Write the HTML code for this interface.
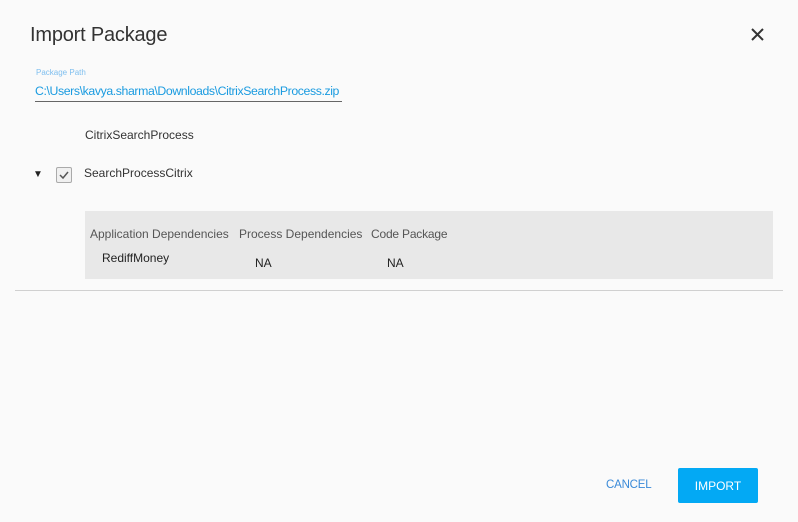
<!DOCTYPE html>
<html><head><style>
body{margin:0;width:798px;height:522px;background:#fafafa;font-family:"Liberation Sans",sans-serif;position:relative;overflow:hidden}
.a{position:absolute;white-space:nowrap}
</style></head><body>
<div class="a" style="left:30px;top:24px;font-size:20px;color:#333;letter-spacing:-0.2px">Import Package</div>
<svg class="a" style="left:751px;top:28px" width="13" height="13"><path d="M1 1L12 12M12 1L1 12" stroke="#333" stroke-width="2"/></svg>
<div class="a" style="left:36px;top:68px;font-size:8px;color:#7fbfef">Package Path</div>
<div class="a" style="left:35px;top:84px;font-size:12.3px;color:#1a9be0;letter-spacing:-0.4px">C:\Users\kavya.sharma\Downloads\CitrixSearchProcess.zip</div>
<div class="a" style="left:35px;top:101px;width:307px;height:1px;background:#666"></div>
<div class="a" style="left:85px;top:128px;font-size:12px;color:#333">CitrixSearchProcess</div>
<div class="a" style="left:33px;top:169px;font-size:10px;color:#222">▼</div>
<div class="a" style="left:56px;top:167px;width:14px;height:14px;border:1px solid #aaa;border-radius:2px;background:#f0f0f0"></div>
<svg class="a" style="left:58px;top:170px" width="12" height="10"><path d="M2 5L5 8L10 2" stroke="#555" stroke-width="1.5" fill="none"/></svg>
<div class="a" style="left:84px;top:166px;font-size:12px;color:#333">SearchProcessCitrix</div>
<div class="a" style="left:85px;top:211px;width:688px;height:68px;background:#e8e8e8"></div>
<div class="a" style="left:90px;top:227px;font-size:12px;color:#555">Application Dependencies</div>
<div class="a" style="left:239px;top:227px;font-size:12px;color:#555">Process Dependencies</div>
<div class="a" style="left:371px;top:227px;font-size:12px;color:#555;letter-spacing:-0.2px">Code Package</div>
<div class="a" style="left:102px;top:251px;font-size:12px;color:#222">RediffMoney</div>
<div class="a" style="left:255px;top:256px;font-size:12px;color:#222">NA</div>
<div class="a" style="left:387px;top:256px;font-size:12px;color:#222">NA</div>
<div class="a" style="left:15px;top:290px;width:768px;height:1px;background:#d0d0d0"></div>
<div class="a" style="left:606px;top:479px;font-size:11.5px;color:#3a8ad8;letter-spacing:-0.2px">CANCEL</div>
<div class="a" style="left:678px;top:468px;width:80px;height:35px;background:#03a9f4;border-radius:2px;color:#fff;font-size:12px;text-align:center;line-height:36px">IMPORT</div>
</body></html>
